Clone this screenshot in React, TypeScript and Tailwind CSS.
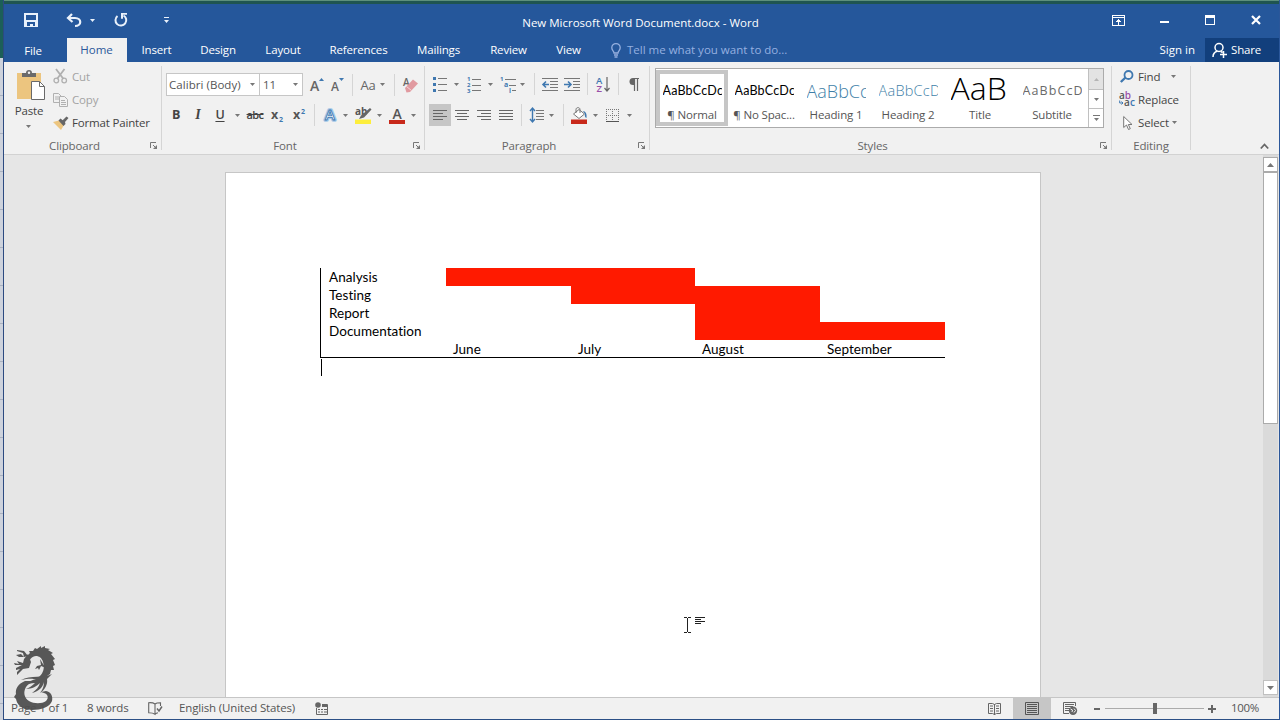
import type { ReactNode } from 'react';
import clsx from 'clsx';

interface IconProps {
  w?: number;
  h?: number;
  className?: string;
  crisp?: boolean;
  children: ReactNode;
}

function Icon({ w = 16, h = 16, className, crisp, children }: IconProps) {
  return (
    <svg
      width={w}
      height={h}
      viewBox={`0 0 ${w} ${h}`}
      fill="none"
      className={clsx('shrink-0 overflow-visible', className)}
      shapeRendering={crisp ? 'crispEdges' : undefined}
    >
      {children}
    </svg>
  );
}

function Caret({ className = 'text-[#777777]' }: { className?: string }) {
  return (
    <Icon w={5} h={3} className={className}>
      <path d="M0 0h5L2.500 3z" fill="currentColor" />
    </Icon>
  );
}

function Cell({ className, children }: { className: string; children?: ReactNode }) {
  return <div className={clsx('flex h-full shrink-0 items-center justify-center', className)}>{children}</div>;
}

function Divider({ className }: { className: string }) {
  return <div className={clsx('h-[22px] w-px shrink-0 bg-[#d5d5d5]', className)} />;
}

function Launcher() {
  return (
    <Icon w={9} h={9}>
      <path d="M1.500 7V1.500H7" stroke="#777777" />
      <path d="M4 4l3 3" stroke="#777777" />
      <path d="M8 4v4H4z" fill="#777777" />
    </Icon>
  );
}

interface GroupProps {
  label: string;
  className: string;
  launcher?: boolean;
  children: ReactNode;
}

function Group({ label, className, launcher = true, children }: GroupProps) {
  return (
    <section className={clsx('flex h-full shrink-0', className)}>
      <div className="flex min-w-0 flex-1 flex-col">
        <div className="h-[75px]">{children}</div>
        <div className="flex h-[17px] items-center">
          <span className="flex-1 text-center text-[#666666]">{label}</span>
          {launcher && (
            <div className="w-4 pl-1">
              <Launcher />
            </div>
          )}
        </div>
      </div>
      <div className="mt-1 h-[84px] w-px bg-[#d5d5d5]" />
    </section>
  );
}

function TitleBar() {
  return (
    <header className="flex h-[34px] items-center text-white">
      <div className="flex h-full w-[518px] items-center pb-[2px]">
        <Icon w={14} h={14} className="ml-5" crisp>
          <path d="M0 0h14v14H0z" fill="#e9f1fb" />
          <path d="M2 2h10v5H2zM3 9h8v4H9v-2H6v2H3z" fill="#25579b" />
        </Icon>
        <Icon w={16} h={14} className="ml-7">
          <path d="M6 1L2 5l4.500 4M2.500 5H9c7 0 7 8 0 8" stroke="#e9f1fb" strokeWidth="2.200" />
        </Icon>
        <Caret className="ml-2 text-[#e9f1fb]" />
        <Icon w={14} h={14} className="ml-[19px]">
          <path d="M9.500 2.500A5.400 5.400 0 1 1 3.500 3" stroke="#e9f1fb" strokeWidth="2" />
          <path d="M7 0h6v1.800H9v4H7z" fill="#e9f1fb" />
        </Icon>
        <Icon w={5} h={6} className="ml-[36px]">
          <path d="M0 0h5v1H0zM0 3h5L2.500 6z" fill="#e9f1fb" />
        </Icon>
      </div>
      <h1 className="w-[237px] whitespace-nowrap pt-[3px] text-center tracking-[0px]">
        New Microsoft Word Document.docx - Word
      </h1>
      <div className="flex h-full flex-1 items-center justify-end pb-[2px] pr-px">
        <Cell className="w-[46px]">
          <Icon w={13} h={11} crisp>
            <path d="M.5.5h12v10H.5zM1 2.500h11" stroke="#fff" />
            <path d="M6 4h1v6H6zM5 5h3v1H5zM4 6h5v1H4z" fill="#fff" />
          </Icon>
        </Cell>
        <Cell className="w-[46px]">
          <div className="mt-[3px] h-[2px] w-[9px] bg-white" />
        </Cell>
        <Cell className="w-[46px]">
          <div className="h-[10px] w-[10px] border border-t-[3px] border-white" />
        </Cell>
        <Cell className="w-[45px]">
          <Icon w={10} h={10}>
            <path d="M1 1l8 8M9 1L1 9" stroke="#fff" strokeWidth="2.200" />
          </Icon>
        </Cell>
      </div>
    </header>
  );
}

const TABS = [
  { name: 'Insert', width: 'w-[59px]' },
  { name: 'Design', width: 'w-[64px]' },
  { name: 'Layout', width: 'w-[66px]' },
  { name: 'References', width: 'w-[85px]' },
  { name: 'Mailings', width: 'w-[75px]' },
  { name: 'Review', width: 'w-[65px]' },
  { name: 'View', width: 'w-[55px]' },
];

function TabBar() {
  return (
    <nav className="flex h-6 items-center text-white">
      <Cell className="w-[63px] pr-[5px] pt-[2px]">File</Cell>
      <Cell className="w-[60px] bg-[#f1f1f1] pr-px tracking-[0px] text-[#2b579a]">Home</Cell>
      {TABS.map((tab) => (
        <Cell key={tab.name} className={tab.width}>
          {tab.name}
        </Cell>
      ))}
      <Icon w={10} h={15} className="ml-[15px]">
        <path d="M3 10c0-2-2.200-2.500-2.200-5.200a4.200 4.200 0 0 1 8.400 0C9.200 7.500 7 8 7 10zM3 12h4M3.500 14h3" stroke="#96b0e0" strokeWidth="1.300" />
      </Icon>
      <span className="ml-[6px] w-[180px] whitespace-nowrap tracking-[0px] text-[#96b0e0]">Tell me what you want to do...</span>
      <span className="ml-auto tracking-[0px]">Sign in</span>
      <div className="ml-[10px] flex h-full w-[74px] items-center bg-[#123f7c] pl-[7px]">
        <Icon w={16} h={16} className="mr-[3px]">
          <circle cx="7" cy="5.500" r="4" stroke="#fff" strokeWidth="1.500" />
          <path d="M1 15c0-3 2-5.300 4.500-5.800M8.500 9.300l2 1.200M11.500 9v7M8 12.500h7" stroke="#fff" strokeWidth="1.500" />
        </Icon>
        Share
      </div>
    </nav>
  );
}

function ClipboardGroup() {
  return (
    <Group label="Clipboard" className="w-[158px]">
      <div className="flex">
        <div className="flex w-[49px] flex-col items-center pt-2">
          <Icon w={28} h={30} className="ml-1">
            <path d="M0 3h24v26H0z" fill="#ecc57f" />
            <path d="M5 7V3h4a3 3 0 0 1 6 0h4v4z" fill="#6a6a6a" />
            <circle cx="12" cy="2.800" r="1.200" fill="#f1f1f1" />
            <path d="M14.500 11.500h8l5 5v13h-13z" fill="#fff" stroke="#6a6a6a" />
            <path d="M22.500 11.500v5h5" stroke="#6a6a6a" />
          </Icon>
          <span className="mt-[3px] pl-px leading-4">Paste</span>
          <Caret className="mt-[6px] text-[#777777]" />
        </div>
        <div className="pt-[3px]">
          <div className="flex h-[23px] items-center text-[#a3a3a3]">
            <Icon w={15} h={15} className="mr-1">
              <path d="M3 0l7.500 10M11.500 0L4 10" stroke="#b0b0b0" strokeWidth="1.800" />
              <circle cx="3.300" cy="11.500" r="2.300" stroke="#b0b0b0" strokeWidth="1.300" />
              <circle cx="11.200" cy="11.500" r="2.300" stroke="#b0b0b0" strokeWidth="1.300" />
            </Icon>
            Cut
          </div>
          <div className="flex h-[23px] items-center text-[#a3a3a3]">
            <Icon w={15} h={14} className="mr-1">
              <path d="M.5.5h5l3 3v6h-8zM2 4h4M2 6h4" stroke="#b0b0b0" />
              <path d="M6.500 3.500h5l3 3v7h-8z" fill="#f1f1f1" stroke="#b0b0b0" />
              <path d="M8 7.500h4M8 9.500h5M8 11.500h5" stroke="#b0b0b0" />
            </Icon>
            Copy
          </div>
          <div className="flex h-[23px] items-center">
            <Icon w={16} h={14} className="mr-[3px]">
              <path d="M0 6l6-1.500 5 4.500-3 5z" fill="#ecc57f" />
              <path d="M5.500 4.500l2-2 2.200 1.700L13.500.5 15.500 2l-3.500 4 .5 2-2 2z" fill="#666666" />
            </Icon>
            <span className="whitespace-nowrap tracking-[-0.17px]">Format Painter</span>
          </div>
        </div>
      </div>
    </Group>
  );
}

function FontGroup() {
  return (
    <Group label="Font" className="w-[263px]">
      <div className="flex h-[34px] items-center pl-[4px] pt-[11px]">
        <div className="flex h-[23px] w-[94px] shrink-0 items-center justify-between border border-[#c6c6c6] bg-white pl-[2px] pr-[4px]">
          <span className="whitespace-nowrap tracking-[0.05px] text-[#555555]">Calibri (Body)</span>
          <Caret />
        </div>
        <div className="flex h-[23px] w-[43px] shrink-0 items-center justify-between border border-l-0 border-[#c6c6c6] bg-white pl-[3px] pr-[4px] text-[#555555]">
          11
          <Caret />
        </div>
        <Cell className="ml-[3px] w-[21px]">
          <Icon w={14} h={16}>
            <text x="0" y="14" fontSize="14" fontWeight="600" fill="#666666">A</text>
            <path d="M9 4h5l-2.500-3z" fill="#3f78b0" />
          </Icon>
        </Cell>
        <Cell className="w-[22px]">
          <Icon w={14} h={16}>
            <text x="0" y="14" fontSize="12" fontWeight="600" fill="#666666">A</text>
            <path d="M8 1h5l-2.500 3z" fill="#3f78b0" />
          </Icon>
        </Cell>
        <Divider className="ml-[3px]" />
        <Cell className="ml-[6px] w-[18px] text-[13px] font-medium text-[#666666]">Aa</Cell>
        <Cell className="w-[11px]">
          <Caret />
        </Cell>
        <Divider className="ml-[6px]" />
        <Cell className="ml-[5px] w-[20px]">
          <Icon w={15} h={16}>
            <text x="0" y="9" fontSize="10" fontWeight="600" fill="#666666">A</text>
            <path d="M2 11l8-8.500 5 4-8 8.500-3.500.5z" fill="#e19aa0" />
            <path d="M3.500 9.500l5 4" stroke="#f4d5d7" />
          </Icon>
        </Cell>
      </div>
      <div className="mt-[8px] flex h-[22px] items-center pl-[3px] text-[12.5px] text-[#444444]">
        <Cell className="w-[22px] font-bold">B</Cell>
        <Cell className="w-[22px] font-['Liberation_Serif',serif] text-[14px] font-bold italic">I</Cell>
        <Cell className="w-[22px] font-semibold underline underline-offset-2">U</Cell>
        <Cell className="w-[13px]">
          <Caret />
        </Cell>
        <Cell className="w-[22px] text-[11px] font-semibold tracking-[-0.6px] line-through">abc</Cell>
        <Cell className="w-[22px]">
          <Icon w={13} h={16}>
            <text x="0" y="12" fontSize="12.500" fontWeight="700" fill="#555555">x</text>
            <text x="8" y="15" fontSize="7" fontWeight="700" fill="#3f78b0">2</text>
          </Icon>
        </Cell>
        <Cell className="w-[22px]">
          <Icon w={13} h={16}>
            <text x="0" y="12" fontSize="12.500" fontWeight="700" fill="#555555">x</text>
            <text x="8" y="7" fontSize="7" fontWeight="700" fill="#3f78b0">2</text>
          </Icon>
        </Cell>
        <Divider className="ml-[4px]" />
        <Cell className="ml-[4px] w-[22px]">
          <Icon w={16} h={16}>
            <text x="3" y="13" fontSize="15" fontWeight="600" fill="#fff" stroke="#a5c8e8" strokeWidth="3.500" strokeLinejoin="round">A</text>
            <text x="3" y="13" fontSize="15" fontWeight="600" fill="#fff" stroke="#3f78b0" strokeWidth="0.900">A</text>
          </Icon>
        </Cell>
        <Cell className="w-[8px]">
          <Caret />
        </Cell>
        <Cell className="ml-[3px] w-[22px]">
          <Icon w={17} h={17}>
            <text x="0" y="8" fontSize="10" fontWeight="700" fill="#555555">ab</text>
            <path d="M15 1l1.500 1.500L9 10.500 4 12l2-3.500z" fill="#666666" />
            <path d="M0 12.500h16V17H0z" fill="#fdee3c" />
          </Icon>
        </Cell>
        <Cell className="w-[11px]">
          <Caret />
        </Cell>
        <Cell className="ml-px w-[22px]">
          <Icon w={16} h={17}>
            <text x="3.500" y="12" fontSize="14" fontWeight="600" fill="#555555">A</text>
            <path d="M0 13h16v4H0z" fill="#c8291b" />
          </Icon>
        </Cell>
        <Cell className="w-[11px]">
          <Caret />
        </Cell>
      </div>
    </Group>
  );
}

const ALIGNMENTS = [
  { name: 'left', d: 'M0 .5h14M0 3.500h10M0 6.500h14M0 9.500h10' },
  { name: 'center', d: 'M0 .5h14M2 3.500h10M0 6.500h14M2 9.500h10' },
  { name: 'right', d: 'M0 .5h14M4 3.500h10M0 6.500h14M4 9.500h10' },
  { name: 'justify', d: 'M0 .5h14M0 3.500h14M0 6.500h14M0 9.500h14' },
];

function ParagraphGroup() {
  return (
    <Group label="Paragraph" className="w-[225px]">
      <div className="flex h-[33px] items-center pl-[4px] pt-[11px]">
        <Cell className="w-[22px]">
          <Icon w={14} h={16}>
            <path d="M5 2.500h9M5 8.500h9M5 14.500h9" stroke="#777777" />
            <path d="M0 1h3v3H0zM0 7h3v3H0zM0 13h3v3H0z" fill="#3f78b0" />
          </Icon>
        </Cell>
        <Cell className="w-[11px]">
          <Caret />
        </Cell>
        <Cell className="ml-px w-[22px]">
          <Icon w={14} h={17}>
            <path d="M5 3.500h9M5 9.500h9M5 14.500h9" stroke="#777777" />
            <text x="0" y="5" fontSize="6" fontWeight="700" fill="#3f78b0">1</text>
            <text x="0" y="11" fontSize="6" fontWeight="700" fill="#3f78b0">2</text>
            <text x="0" y="17" fontSize="6" fontWeight="700" fill="#3f78b0">3</text>
          </Icon>
        </Cell>
        <Cell className="w-[11px]">
          <Caret />
        </Cell>
        <Cell className="ml-[2px] w-[21px]">
          <Icon w={17} h={17}>
            <path d="M5 3.500h11M9 9.500h7M12 14.500h4" stroke="#777777" />
            <text x="0" y="5" fontSize="6" fontWeight="700" fill="#3f78b0">1</text>
            <text x="4" y="11" fontSize="7" fontWeight="700" fill="#3f78b0">a</text>
            <text x="9" y="17" fontSize="6.500" fontWeight="700" fill="#3f78b0">i</text>
          </Icon>
        </Cell>
        <Cell className="w-[7px]">
          <Caret />
        </Cell>
        <Divider className="ml-[8px]" />
        <Cell className="ml-[4px] w-[22px]">
          <Icon w={16} h={13}>
            <path d="M0 .5h16M8 3.500h8M8 6.500h8M8 9.500h8M0 12.500h16" stroke="#777777" />
            <path d="M7 6.500H1M4 3.500l-3 3 3 3" stroke="#3f78b0" strokeWidth="1.600" />
          </Icon>
        </Cell>
        <Cell className="w-[22px]">
          <Icon w={16} h={13}>
            <path d="M0 .5h16M9 3.500h7M9 6.500h7M9 9.500h7M0 12.500h16" stroke="#777777" />
            <path d="M0 6.500h6M4 3.500l3 3-3 3" stroke="#3f78b0" strokeWidth="1.600" />
          </Icon>
        </Cell>
        <Divider className="ml-[4px]" />
        <Cell className="ml-[4px] w-[22px]">
          <Icon w={14} h={17}>
            <text x="0" y="7.500" fontSize="9.500" fontWeight="600" fill="#3f78b0">A</text>
            <text x="0.500" y="16" fontSize="9.500" fontWeight="600" fill="#9a4fa8">Z</text>
            <path d="M11 1v14M8.500 12l2.500 3 2.500-3" stroke="#666666" strokeWidth="1.200" />
          </Icon>
        </Cell>
        <Divider className="ml-[4px]" />
        <Cell className="ml-[4px] w-[22px]">
          <Icon w={10} h={13}>
            <path d="M5 .5h5M5.500 0v13M8.500 0v13" stroke="#666666" strokeWidth="1.200" />
            <path d="M5.500 0H4a3.500 3.500 0 0 0 0 7h1.500z" fill="#666666" />
          </Icon>
        </Cell>
      </div>
      <div className="mt-[9px] flex h-[22px] items-center pl-[4px]">
        {ALIGNMENTS.map((align) => (
          <Cell key={align.name} className={clsx('w-[22px]', align.name === 'left' && 'bg-[#c6c6c6]')}>
            <Icon w={14} h={10}>
              <path d={align.d} stroke="#666666" />
            </Icon>
          </Cell>
        ))}
        <Divider className="ml-[4px]" />
        <Cell className="ml-[4px] w-[22px]">
          <Icon w={14} h={16}>
            <path d="M6 3.500h8M6 6.500h8M6 9.500h8M6 12.500h8" stroke="#777777" />
            <path d="M2.500 1v14M0 4l2.500-3L5 4M0 12l2.500 3L5 12" stroke="#3f78b0" strokeWidth="1.400" />
          </Icon>
        </Cell>
        <Cell className="w-[7px]">
          <Caret />
        </Cell>
        <Divider className="ml-[8px]" />
        <Cell className="ml-[4px] w-[22px]">
          <Icon w={16} h={17}>
            <path d="M2.500 7L8 2.500l5.500 4.500L8 11.500z" fill="#fff" stroke="#777777" />
            <path d="M5 6V2.500C5 0 9 0 9 2.500V6" stroke="#777777" />
            <path d="M12 4c3 .5 4 3 3.500 7-1.500-.5-2-2-1.500-4z" fill="#3f78b0" />
            <path d="M0 12.500h16V17H0z" fill="#c8291b" />
          </Icon>
        </Cell>
        <Cell className="w-[11px]">
          <Caret />
        </Cell>
        <Cell className="ml-px w-[21px]">
          <Icon w={13} h={13} crisp>
            <path d="M.5 0v12M6.500 0v12M12.500 0v12M0 .5h13M0 6.500h13" stroke="#777777" strokeDasharray="1 1" />
            <path d="M0 12.500h13" stroke="#555555" />
          </Icon>
        </Cell>
        <Cell className="ml-px w-[11px]">
          <Caret />
        </Cell>
      </div>
    </Group>
  );
}

const STYLES = [
  { name: '¶ Normal', sample: 'AaBbCcDc', sampleClass: "font-['Lato',sans-serif] text-[12.5px] tracking-[0.2px] text-black", selected: true },
  { name: '¶ No Spac...', sample: 'AaBbCcDc', sampleClass: "font-['Lato',sans-serif] text-[12.5px] tracking-[0.2px] text-black" },
  { name: 'Heading 1', sample: 'AaBbCc', sampleClass: 'text-[18px] font-light tracking-[0px] text-[#3f7fa8]' },
  { name: 'Heading 2', sample: 'AaBbCcD', sampleClass: 'text-[14.5px] font-light tracking-[0.25px] text-[#3f7fa8]' },
  { name: 'Title', sample: 'AaB', sampleClass: 'text-[32px] font-light tracking-[0px] text-black' },
  { name: 'Subtitle', sample: 'AaBbCcD', sampleClass: 'text-[12.5px] tracking-[1.1px] text-[#6a6a6a]' },
];

function StylesGroup() {
  return (
    <Group label="Styles" className="w-[462px]">
      <div className="pl-[5px] pt-[6px]">
        <div className="flex h-[60px] w-[449px] border border-[#ababab] bg-white">
          {STYLES.map((style) => (
            <div
              key={style.name}
              className={clsx(
                'mt-px flex h-[56px] w-[72px] shrink-0 flex-col items-center border-4',
                style.selected ? 'border-[#c6c6c6]' : 'border-transparent',
              )}
            >
              <div
                className={clsx(
                  'mt-[3px] flex h-[25px] w-[59px] shrink-0 items-center overflow-hidden whitespace-nowrap leading-none',
                  style.name === 'Title' ? 'pb-[3px]' : 'pt-[3px]',
                  style.sampleClass,
                )}
              >
                {style.sample}
              </div>
              <span className="mt-[5px] whitespace-nowrap leading-4 text-[#555555]">{style.name}</span>
            </div>
          ))}
          <div className="ml-auto flex w-[15px] flex-col border-l border-[#c0c0c0]">
            <Cell className="h-[20px]! bg-[#e3e3e3]">
              <Icon w={5} h={3}>
                <path d="M0 3h5L2.500 0z" fill="#b5b5b5" />
              </Icon>
            </Cell>
            <Cell className="h-[20px]! border-y border-[#c0c0c0]">
              <Caret />
            </Cell>
            <Cell className="h-[18px]!">
              <Icon w={7} h={6}>
                <path d="M0 .5h7" stroke="#777777" />
                <path d="M1 3h5L3.500 6z" fill="#777777" />
              </Icon>
            </Cell>
          </div>
        </div>
      </div>
    </Group>
  );
}

function EditingGroup() {
  return (
    <Group label="Editing" className="w-[79px]" launcher={false}>
      <div className="pl-[7px] pt-[3px]">
        <div className="flex h-[23px] items-center">
          <Icon w={14} h={13} className="ml-px mr-[4px]">
            <circle cx="8.500" cy="5" r="4" stroke="#3f78b0" strokeWidth="1.800" />
            <path d="M5.500 7.500L.8 12" stroke="#3f78b0" strokeWidth="2.400" />
          </Icon>
          <span className="w-[33px]">Find</span>
          <Caret />
        </div>
        <div className="flex h-[23px] items-center">
          <Icon w={17} h={17} className="mr-[2px]">
            <text x="0" y="8" fontSize="10" fontWeight="600" fill="#555555">a</text>
            <text x="5.800" y="8" fontSize="10" fontWeight="600" fill="#9a4fa8">b</text>
            <text x="5" y="15" fontSize="10" fontWeight="600" fill="#555555">a</text>
            <text x="11" y="15" fontSize="10" fontWeight="600" fill="#3f78b0">c</text>
            <path d="M.7 9.500v2.500H4M2.500 10.500L4 12l-1.500 1.500" stroke="#3f78b0" />
          </Icon>
          Replace
        </div>
        <div className="flex h-[23px] items-center">
          <Icon w={10} h={16} className="ml-[4px] mr-[5px]">
            <path d="M.7 1.500v11l2.800-2.500 2 4.500 1.800-.8-2-4.200H9z" fill="#fff" stroke="#777777" />
          </Icon>
          <span className="mr-[3px]">Select</span>
          <Caret />
        </div>
      </div>
    </Group>
  );
}

function Ribbon() {
  return (
    <div className="flex h-[93px] border-b border-[#d2d2d2] bg-[#f1f1f1] text-[#444444]">
      <ClipboardGroup />
      <FontGroup />
      <ParagraphGroup />
      <StylesGroup />
      <EditingGroup />
      <div className="flex flex-1 items-end justify-end pb-[5px] pr-[10px]">
        <Icon w={9} h={6}>
          <path d="M.8 5.500l3.700-4 3.700 4" stroke="#666666" strokeWidth="1.800" />
        </Icon>
      </div>
    </div>
  );
}

const TASKS = [
  { name: 'Analysis', months: [true, true, false, false] },
  { name: 'Testing', months: [false, true, true, false] },
  { name: 'Report', months: [false, false, true, false] },
  { name: 'Documentation', months: [false, false, true, true] },
];

const MONTHS = ['June', 'July', 'August', 'September'];

function GanttTable() {
  return (
    <div className="w-[625px] border-b border-l border-black">
      {TASKS.map((task) => (
        <div key={task.name} className="grid h-[18px] grid-cols-[125px_125px_124px_125px_125px] items-center">
          <span className="pl-2">{task.name}</span>
          {task.months.map((active, i) => (
            <div key={MONTHS[i]} className={clsx('h-full', active && 'bg-[#ff1a00]')} />
          ))}
        </div>
      ))}
      <div className="grid h-[17px] grid-cols-[125px_125px_124px_125px_125px] items-center">
        <span />
        {MONTHS.map((month) => (
          <span key={month} className="pl-[7px]">
            {month}
          </span>
        ))}
      </div>
    </div>
  );
}

function ScrollBar() {
  return (
    <div className="flex h-full w-[15px] flex-col bg-[#dadada] pt-[2px]">
      <Cell className="h-[15px]! border border-[#ababab] bg-white">
        <Icon w={7} h={4}>
          <path d="M0 4h7L3.500 0z" fill="#777777" />
        </Icon>
      </Cell>
      <div className="h-[252px] border border-[#ababab] bg-white" />
      <Cell className="mt-auto mb-[2px] h-[15px]! border border-[#c0c0c0] bg-white">
        <Icon w={7} h={4}>
          <path d="M0 0h7L3.500 4z" fill="#777777" />
        </Icon>
      </Cell>
    </div>
  );
}

function StatusBar() {
  return (
    <footer className="flex h-[22px] items-center border-t border-[#c6c6c6] bg-[#f1f1f1] pb-px text-[#555555]">
      <span className="w-[76px] whitespace-nowrap pl-[7px]">Page 1 of 1</span>
      <span className="ml-[7px] w-[61px] whitespace-nowrap">8 words</span>
      <Icon w={15} h={13}>
        <path d="M7 2C5 .5 3 .5.700.700v10c2.300 0 4.300 0 6.300 1.500zM7 2C8 1 9.500.7 12.500.7V4M7 12.200c1-1 2-1.400 3-1.500" stroke="#666666" strokeWidth="1.100" />
        <path d="M9 6.500l2 2.500 3-4.500" stroke="#666666" strokeWidth="1.500" />
      </Icon>
      <span className="ml-[16px] w-[120px] whitespace-nowrap">English (United States)</span>
      <Icon w={14} h={13} className="ml-[16px]">
        <path d="M1.500 6v6.500h11v-10H7" stroke="#666666" />
        <path d="M7 3h6v2H7zM3 7h2v1H3zM6 7h2v1H6zM9 7h3v1H9zM3 9.500h2v1H3zM6 9.500h2v1H6zM9 9.500h3v1H9z" fill="#666666" />
        <circle cx="3" cy="3" r="2.800" fill="#666666" />
      </Icon>
      <div className="-mb-px ml-auto flex h-[21px] items-center pr-px">
        <Cell className="w-[38px]">
          <Icon w={13} h={13}>
            <path d="M.5 1.500h4l2 1 2-1h4v10h-4l-2 1-2-1h-4zM6.500 2v11" stroke="#666666" />
            <path d="M2 4h3M2 6.500h3M2 9h3M8 4h3M8 6.500h3M8 9h3" stroke="#666666" />
          </Icon>
        </Cell>
        <Cell className="w-[38px] bg-[#c6c6c6]">
          <Icon w={14} h={13}>
            <path d="M.5.5h13v12H.5zM2 2.500h10M2 4.500h10M2 6.500h10M2 8.500h10M2 10.500h10" stroke="#555555" />
          </Icon>
        </Cell>
        <Cell className="w-[38px]">
          <Icon w={14} h={13}>
            <path d="M12.500 4V.5H.5v11H6M2 2.500h9M2 4.500h8M2 6.500h5M2 8.500h4" stroke="#666666" />
            <circle cx="10" cy="8.800" r="4.200" fill="#666666" />
            <path d="M7.500 7l2 1-.5 2M11 6.500l1.500 2-1.500 2" stroke="#f1f1f1" />
          </Icon>
        </Cell>
        <div className="ml-[5px] h-[2px] w-[6px] bg-[#666666]" />
        <div className="ml-[5px] flex h-[11px] w-[99px] items-center justify-center bg-[linear-gradient(#ababab,#ababab)] bg-[length:100%_1px] bg-center bg-no-repeat">
          <div className="h-[11px] w-[4px] bg-[#666666]" />
        </div>
        <Icon w={8} h={8} className="ml-[4px]" crisp>
          <path d="M0 3h8v2H0zM3 0h2v8H3z" fill="#666666" />
        </Icon>
        <span className="ml-[15px] w-[47px] pb-px tracking-[-0.35px]">100%</span>
      </div>
    </footer>
  );
}

function DragonMark() {
  return (
    <svg
      width="46"
      height="65"
      viewBox="0 0 46 65"
      fill="#505050"
      className="pointer-events-none absolute left-[13px] top-[646px] opacity-95"
    >
      {/* arched back with spines */}
      <path d="M14 10l3-3-1-2 4 0 2-3 2 1 4-3 0 2 4-2 0 2 5 1-2 1 5 3-2 1 4 5-2 1 2 5-2 1 1 4-3 0-1 4-3 2-3 3-9 2 5-5c3-3 5-8 3-14-1-4-4-6-7-6-4 0-7 4-8 8l-5 3z" />
      {/* head, jaw and horns */}
      <path d="M15 8l3 8-2 6-6 1-3 3-3 3 0-3 3-3-4 1 0-2 6-3-7 0-1-2 5 1-2-3 6 2 1-4z" />
      <path d="M4 4l7 1 4 5-4 1-1-4-6-2zM3 9l5-1 3 3-5 0z" />
      {/* foreleg */}
      <path d="M27 13l3 5 3 4-5-2-2 4-1-2-3 1 2-3 4-1z" />
      {/* wing feathers */}
      <path d="M39 28c-7 4-22 1-31 6 8-2 12-1 15-1-7 2-12 5-14 8 5-3 9-4 13-4-3 3-6 5-9 6 6 0 11-3 14-6-1 4-4 7-8 10 7-2 11-6 12-11 0 4-1 7-4 11 5-3 8-9 7-14z" />
      {/* tail loop */}
      <path d="M12 35c-7 3-10 8-9 13l-2 3 2 2c1 5 4 8 9 10l7 1c9 0 18-3 20-9 1-5-1-9-6-10l-5 1 3 1c4 1 5 5 2 8-4 3-12 3-17 0-5-3-6-9-3-14 2-3 5-5 9-6z" />
    </svg>
  );
}

function TextPointer() {
  return (
    <svg
      width="23"
      height="18"
      viewBox="0 0 23 18"
      fill="none"
      stroke="#222222"
      shapeRendering="crispEdges"
      className="pointer-events-none absolute left-[684px] top-[616px]"
    >
      <path d="M0 1.500h3M4 1.500h3M3.500 2v14M0 16.500h3M4 16.500h3M11 1.500h10M11 3.500h6M11 5.500h10M11 7.500h6" />
    </svg>
  );
}

export default function App() {
  return (
    <div className="relative flex h-[720px] w-[1280px] overflow-hidden bg-[#245a57] font-['Open_Sans','Noto_Sans',sans-serif] text-[11.5px] leading-4 tracking-[-0.15px]">
      {/* Edge of the window behind */}
      <div className="flex w-1 flex-col border-r border-[#2c4a80]">
        <div className="h-[58px] bg-[#1c5f58]" />
        <div className="flex-1 bg-[repeating-linear-gradient(#cdd2dc_0_37px,#aab1c0_37px_38px)]" />
      </div>
      <div className="flex w-[1275px] flex-col border-b border-[#2b4f86]">
        <div className="h-1 border-t border-[#5d8f7c] bg-[#1f5551]" />
        <div className="bg-[#25579b]">
          <TitleBar />
          <TabBar />
        </div>
        <Ribbon />
        <main className="flex h-[542px] bg-[#e6e6e6]">
          <div className="ml-[221px] mt-[17px] w-[816px] border border-b-0 border-[#c6c6c6] bg-white pl-[94px] pt-[95px] font-['Lato',sans-serif] text-[13.5px] tracking-[0.03px] text-black [font-variant-ligatures:none]">
            <GanttTable />
            <div className="ml-px mt-px h-[17px] w-px bg-black" />
          </div>
          <div className="ml-auto pr-px">
            <ScrollBar />
          </div>
        </main>
        <StatusBar />
      </div>
      <div className="w-px bg-[#2b579a]" />
      <TextPointer />
      <DragonMark />
    </div>
  );
}
